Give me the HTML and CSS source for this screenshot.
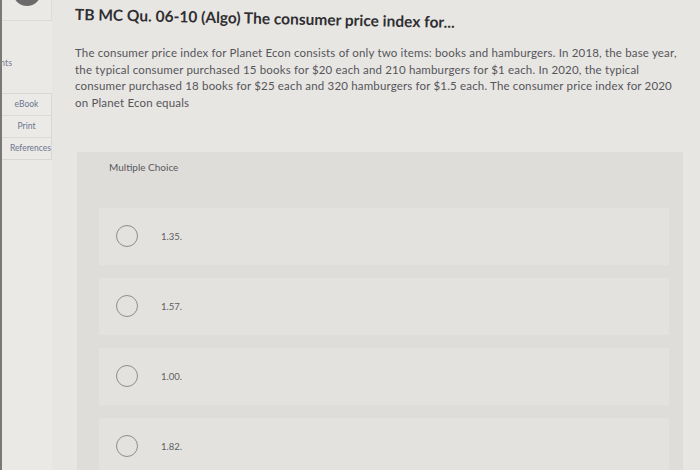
FILE: index.html
```html
<!DOCTYPE html>
<html>
<head>
<meta charset="utf-8">
<link rel="stylesheet" href="styles.css">
</head>
<body>
<div class="screen">
  <aside class="sidebar">
    <div class="avatar-zone"><span class="avatar"></span></div>
    <div class="points">nts</div>
    <nav class="tools">
      <div class="tool">eBook</div>
      <div class="tool">Print</div>
      <div class="tool">References</div>
    </nav>
  </aside>
  <main class="content">
    <h1 class="title">TB MC Qu. 06-10 (Algo) The consumer price index for...</h1>
    <p class="question">The consumer price index for Planet Econ consists of only two items: books and hamburgers. In 2018, the base year,<br>the typical consumer purchased 15 books for $20 each and 210 hamburgers for $1 each. In 2020, the typical<br>consumer purchased 18 books for $25 each and 320 hamburgers for $1.5 each. The consumer price index for 2020<br>on Planet Econ equals</p>
    <section class="card">
      <div class="card-label">Multiple Choice</div>
      <div class="options">
        <div class="option"><span class="radio"></span><span class="opt-text">1.35.</span></div>
        <div class="option"><span class="radio"></span><span class="opt-text">1.57.</span></div>
        <div class="option"><span class="radio"></span><span class="opt-text">1.00.</span></div>
        <div class="option"><span class="radio"></span><span class="opt-text">1.82.</span></div>
      </div>
    </section>
  </main>
</div>
</body>
</html>
```

FILE: styles.css
```css
html, body {
  margin: 0;
  padding: 0;
  width: 700px;
  height: 470px;
  overflow: hidden;
  background: #e8e6e3;
  font-family: Lato, "Open Sans", sans-serif;
}
.screen {
  display: flex;
  height: 470px;
  border-left: 2px solid #7a7876;
}
.sidebar {
  width: 50px;
  flex: none;
  background: #ebe9e6;
  display: flex;
  flex-direction: column;
}
.avatar-zone {
  height: 20px;
  border-bottom: 1px solid #dddbd8;
  border-right: 1px solid #dddbd8;
  overflow: hidden;
  display: flex;
  justify-content: center;
}
.avatar {
  display: block;
  width: 28px;
  height: 28px;
  margin-top: -22px;
  border-radius: 50%;
  background: #6c6b6b;
}
.points {
  margin-top: 36px;
  height: 36px;
  font-size: 9px;
  color: #7d8190;
  margin-left: -2px;
}
.tools {
  border: 1px solid #d9d7d4;
  border-left: none;
  background: #eceae7;
}
.tool {
  height: 21px;
  line-height: 21px;
  text-align: center;
  font-size: 8.5px;
  color: #6b7590;
  border-bottom: 1px solid #dcdad7;
  white-space: nowrap;
  overflow: hidden;
}
.tool:last-child { border-bottom: none; text-align: right; }
.content {
  flex: 1;
  padding-left: 23px;
  padding-top: 4px;
  display: flex;
  flex-direction: column;
}
.title {
  margin: 0;
  font-size: 15.5px;
  font-weight: 700;
  color: #2f2f32;
  line-height: 20px;
  white-space: nowrap;
  transform: rotate(1.2deg);
  transform-origin: left center;
}
.question {
  margin: 21px 0 0 0;
  font-size: 11.5px;
  letter-spacing: 0.17px;
  line-height: 16.7px;
  color: #55555a;
  white-space: nowrap;
}
.card {
  margin-top: 40px;
  margin-left: 2px;
  width: 606px;
  flex: 1;
  background: #dfddda;
  padding: 10px 0 0 32px;
  box-sizing: border-box;
}
.card-label {
  font-size: 10px;
  color: #59595e;
  height: 20px;
  line-height: 10px;
}
.options {
  margin-top: 26px;
  margin-left: -10px;
  display: flex;
  flex-direction: column;
  gap: 13px;
}
.option {
  height: 57px;
  flex: none;
  background: #e4e2df;
  display: flex;
  align-items: center;
  padding-left: 17px;
  margin-right: 14px;
}
.radio {
  width: 22px;
  height: 22px;
  border: 1.3px solid #8d8d90;
  border-radius: 50%;
  box-sizing: border-box;
}
.opt-text {
  margin-left: 23px;
  font-size: 9.5px;
  color: #5e5e62;
}
```
